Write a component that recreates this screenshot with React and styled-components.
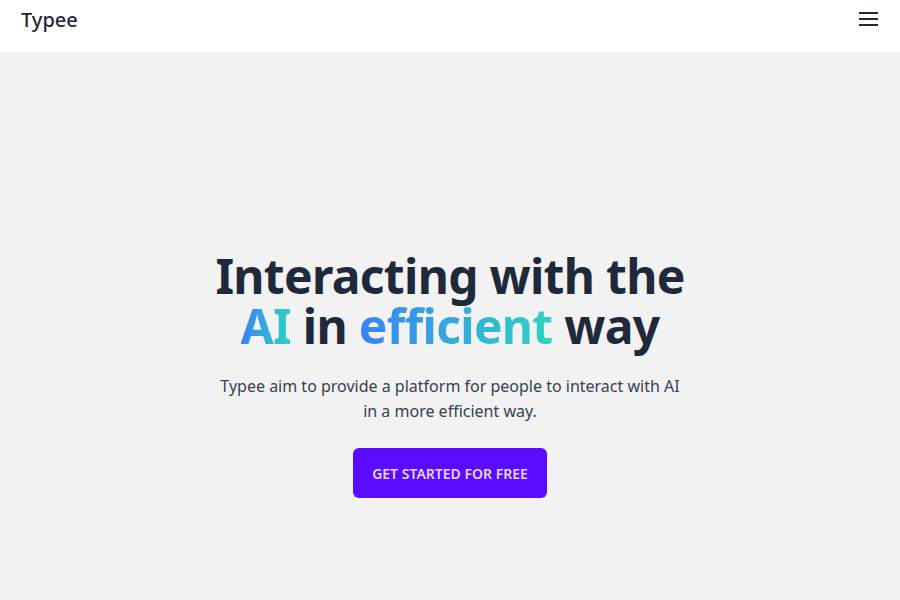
import styled, { createGlobalStyle } from "styled-components"

const Global = createGlobalStyle`
  html, body {
    margin: 0;
    padding: 0;
    background: #f2f2f2;
    font-family: "Noto Sans", "Open Sans", sans-serif;
  }
`

const Page = styled.div`
  min-height: 600px;
  display: flex;
  flex-direction: column;
  background: #f2f2f2;
`

const Nav = styled.nav`
  height: 52px;
  background: #ffffff;
  display: flex;
  align-items: center;
  justify-content: space-between;
  padding: 0 22px 0 21px;
  box-sizing: border-box;
`

const Brand = styled.div`
  font-size: 20px;
  font-weight: 500;
  color: #1f2937;
  margin-top: -13px;
`

const Burger = styled.button`
  border: none;
  background: none;
  padding: 0;
  margin-top: -14px;
  display: flex;
  flex-direction: column;
  gap: 4px;
  cursor: pointer;

  span {
    display: block;
    width: 19px;
    height: 2px;
    background: #1f2937;
  }
`

const Hero = styled.section`
  display: flex;
  flex-direction: column;
  align-items: center;
  text-align: center;
  padding-top: 199px;
`

const Title = styled.h1`
  margin: 0;
  font-size: 48px;
  line-height: 50px;
  font-weight: 700;
  letter-spacing: -0.7px;
  color: #1e293b;
`

const Grad = styled.span`
  background: linear-gradient(to right, #3b82f6, #2dd4bf);
  -webkit-background-clip: text;
  background-clip: text;
  color: transparent;
`

const Lead = styled.p`
  margin: 23px 0 0;
  max-width: 470px;
  font-size: 16px;
  line-height: 25px;
  color: #374151;
`

const Cta = styled.button`
  margin-top: 24px;
  width: 194px;
  height: 50px;
  border: none;
  border-radius: 6px;
  background: #5b0bff;
  color: #e4d4ff;
  font-family: inherit;
  font-size: 14px;
  font-weight: 600;
  text-transform: uppercase;
  cursor: pointer;
`

export default function App() {
  return (
    <Page>
      <Global />
      <Nav>
        <Brand>Typee</Brand>
        <Burger aria-label="menu">
          <span />
          <span />
          <span />
        </Burger>
      </Nav>
      <Hero>
        <Title>
          Interacting with the
          <br />
          <Grad>AI</Grad> in <Grad>efficient</Grad> way
        </Title>
        <Lead>
          Typee aim to provide a platform for people to interact with AI in a more efficient way.
        </Lead>
        <Cta>Get started for free</Cta>
      </Hero>
    </Page>
  )
}
